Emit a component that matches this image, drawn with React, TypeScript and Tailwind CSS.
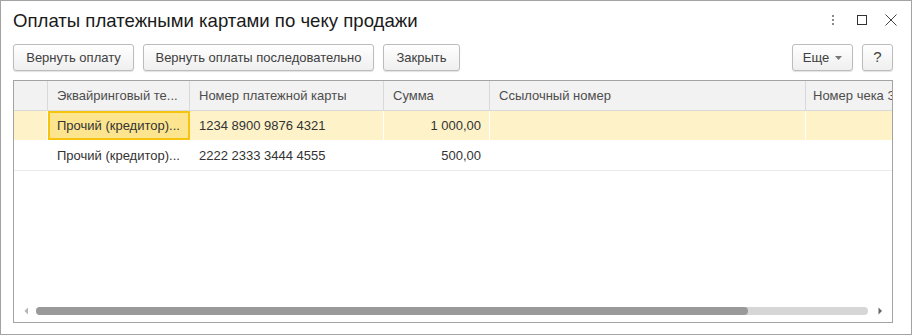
import React from "react";

type Row = {
  id: number;
  terminal: string;
  card: string;
  sum: string;
  ref: string;
  check: string;
};

const rows: Row[] = [
  { id: 1, terminal: "Прочий (кредитор)...", card: "1234 8900 9876 4321", sum: "1 000,00", ref: "", check: "" },
  { id: 2, terminal: "Прочий (кредитор)...", card: "2222 2333 3444 4555", sum: "500,00", ref: "", check: "" },
];

// ширины колонок вместе с разделителем справа
const cols = ["w-[34px]", "w-[142px]", "w-[194px]", "w-[106px]", "w-[316px]", "flex-1"];

const Btn = ({ children, className = "" }: { children: React.ReactNode; className?: string }) => (
  <button
    className={
      "h-[27px] rounded-[3px] border border-[#bcbcbc] bg-gradient-to-b from-white to-[#efefef] text-[13px] text-[#404040] shadow-[0_1px_1px_rgba(0,0,0,0.12)] flex items-center justify-center " +
      className
    }
  >
    {children}
  </button>
);

const App: React.FC = () => {
  return (
    <div className="w-[913px] h-[336px] bg-white" style={{ fontFamily: '"Liberation Sans", Arial, sans-serif' }}>
      <div className="w-[912px] h-[335px] border border-[#a3a3a3] flex flex-col">
        {/* заголовок */}
        <div className="flex items-start h-[33px] pt-[9px] pl-[12px] pr-[13px]">
          <div className="text-[18.6px] leading-[22px] text-[#1a1a1a] flex-1">Оплаты платежными картами по чеку продажи</div>
          <div className="flex items-center gap-[15px] pt-[3px] text-[#555]">
            <svg width="14" height="14" viewBox="0 0 14 14">
              <rect x="6" y="2" width="2" height="2" fill="#8a8a8a" />
              <rect x="6" y="6" width="2" height="2" fill="#8a8a8a" />
              <rect x="6" y="10" width="2" height="2" fill="#8a8a8a" />
            </svg>
            <svg width="14" height="14" viewBox="0 0 14 14">
              <rect x="2.5" y="2.5" width="9" height="9" fill="none" stroke="#333" strokeWidth="1" />
            </svg>
            <svg width="14" height="14" viewBox="0 0 14 14">
              <path d="M1.5 1.5 L12.5 12.5 M12.5 1.5 L1.5 12.5" stroke="#444" strokeWidth="1" />
            </svg>
          </div>
        </div>

        {/* панель кнопок */}
        <div className="flex items-center h-[27px] mt-[10px] pl-[12px] pr-[18px]">
          <Btn className="w-[121px]">Вернуть оплату</Btn>
          <Btn className="w-[231px] ml-[9px]">Вернуть оплаты последовательно</Btn>
          <Btn className="w-[77px] ml-[9px]">Закрыть</Btn>
          <div className="flex-1" />
          <Btn className="w-[61px] gap-[6px]">
            <span>Еще</span>
            <svg width="7" height="4" viewBox="0 0 7 4">
              <path d="M0 0 L7 0 L3.5 4 Z" fill="#777" />
            </svg>
          </Btn>
          <Btn className="w-[31px] ml-[9px] text-[15px] text-[#333]">?</Btn>
        </div>

        {/* таблица */}
        <div className="mt-[9px] ml-[12px] w-[880px] h-[243px] border border-[#a3a3a3] flex flex-col overflow-hidden">
          <div className="flex h-[30px] bg-[#f2f2f2] border-b border-[#d9d9d9] text-[13px] text-[#4d4d4d]">
            {["", "Эквайринговый те...", "Номер платежной карты", "Сумма", "Ссылочный номер", "Номер чека З"].map((t, i) => (
              <div
                key={i}
                className={
                  cols[i] +
                  " shrink-0 flex items-center whitespace-nowrap overflow-hidden " +
                  (i < 5 ? "pl-[9px] border-r border-[#d9d9d9]" : "pl-[7px]")
                }
              >
                {t}
              </div>
            ))}
          </div>

          {rows.map((r, ri) => {
            const sel = ri === 0;
            return (
              <div
                key={r.id}
                className={"flex h-[30px] text-[13px] text-[#333] border-b " + (sel ? "bg-[#fdf2c8] border-white" : "bg-white border-[#ececec]")}
              >
                <div className={cols[0] + " shrink-0 border-r " + (sel ? "border-white" : "border-transparent")} />
                <div
                  className={
                    cols[1] +
                    " shrink-0 flex items-center whitespace-nowrap " +
                    (sel ? "border-2 border-[#f6c40e] bg-[#fde58f] pl-[7px]" : "pl-[9px] border-r border-transparent")
                  }
                >
                  {r.terminal}
                </div>
                <div className={cols[2] + " shrink-0 flex items-center pl-[9px] border-r " + (sel ? "border-white" : "border-transparent")}>
                  {r.card}
                </div>
                <div className={cols[3] + " shrink-0 flex items-center justify-end pr-[8px] border-r " + (sel ? "border-white" : "border-transparent")}>
                  {r.sum}
                </div>
                <div className={cols[4] + " shrink-0 flex items-center pl-[9px] border-r " + (sel ? "border-white" : "border-transparent")}>
                  {r.ref}
                </div>
                <div className={cols[5] + " flex items-center pl-[9px]"}>{r.check}</div>
              </div>
            );
          })}

          <div className="flex-1" />

          {/* горизонтальная прокрутка */}
          <div className="flex items-center h-[10px] mb-[6px] pl-[10px] pr-[9px]">
            <svg width="6" height="8" viewBox="0 0 6 8">
              <path d="M4 0.5 L0.5 4 L4 7.5 Z" fill="#b5b5b5" />
            </svg>
            <div className="flex-1 ml-[6px] mr-[9px] h-[8px] rounded-full bg-[#d6d6d6] flex">
              <div className="w-[712px] h-[8px] rounded-full bg-[#999999]" />
            </div>
            <svg width="6" height="8" viewBox="0 0 6 8">
              <path d="M1.5 0.5 L5 4 L1.5 7.5 Z" fill="#666" />
            </svg>
          </div>
        </div>
      </div>
    </div>
  );
};

export default App;
